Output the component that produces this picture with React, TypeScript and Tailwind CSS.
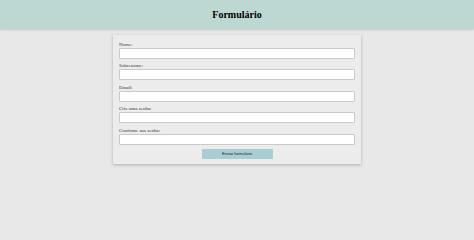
const fields = [
  { label: "Nome:", type: "text" },
  { label: "Sobrenome:", type: "text" },
  { label: "Email:", type: "email" },
  { label: "Crie uma senha:", type: "password" },
  { label: "Confirme sua senha:", type: "password" },
];

export default function App() {
  return (
    <div className="min-h-screen bg-[#e8e8e8] font-['Liberation_Serif',serif] text-black">
      {/* Header */}
      <header className="h-[29px] bg-[#bdd8d3] flex items-center justify-center shadow-[0_1px_2px_rgba(0,0,0,0.15)]">
        <h1 className="text-[10px] font-bold leading-none">Formulário</h1>
      </header>

      {/* Form card */}
      <form className="mx-auto mt-[6px] w-[248px] bg-[#ececec] px-[6px] pt-[6.5px] pb-[5px] shadow-[0_1px_3px_rgba(0,0,0,0.25)]">
        {fields.map((f) => (
          <div key={f.label} className="mb-[4.5px] flex flex-col">
            <label className="h-[6px] font-['Liberation_Serif',serif] text-[5px] leading-[6px] text-[#333]">{f.label}</label>
            <input
              type={f.type}
              className="h-[11px] w-full rounded-[1px] border border-[#c9c9c9] bg-white outline-none"
            />
          </div>
        ))}
        <div className="flex justify-center">
          <button
            type="button"
            className="h-[10px] w-[71px] rounded-[1px] bg-[#a7ced2] font-['Liberation_Sans',sans-serif] text-[4px] leading-none text-[#222]"
          >
            Enviar formulário
          </button>
        </div>
      </form>
    </div>
  );
}
